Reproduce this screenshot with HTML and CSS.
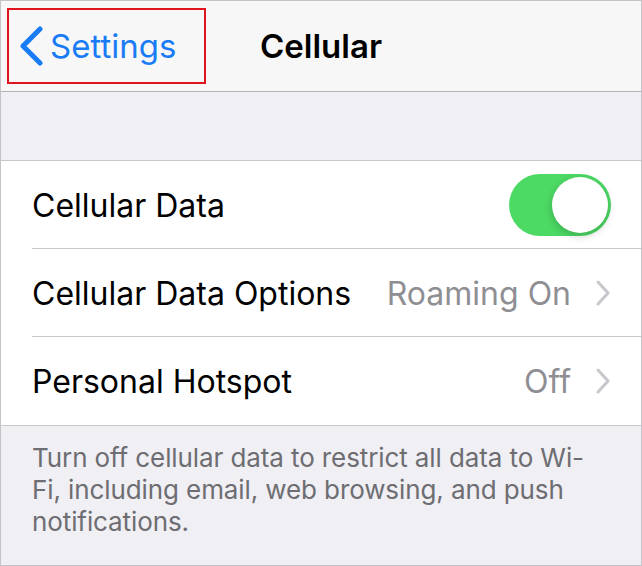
FILE: index.html
```html
<!DOCTYPE html>
<html lang="en">
<head>
    <meta charset="UTF-8">
    <meta name="viewport" content="width=device-width, initial-scale=1.0">
    <title>Cellular</title>
    <link rel="stylesheet" href="styles.css">
</head>
<body>
    <div class="screen">
        <div class="navbar">
            <div class="back">
                <svg class="back-chevron" width="26" height="40" viewBox="0 0 26 40">
                    <path d="M22 3 L5 20 L22 37" fill="none" stroke="#1a7cf5" stroke-width="5" stroke-linecap="round" stroke-linejoin="round"/>
                </svg>
                <span>Settings</span>
            </div>
            <h1 class="title">Cellular</h1>
        </div>

        <div class="group">
            <div class="row">
                <span class="label">Cellular Data</span>
                <div class="switch on"><div class="knob"></div></div>
            </div>
            <div class="row">
                <span class="label">Cellular Data Options</span>
                <span class="value">Roaming On</span>
                <svg class="chevron" width="16" height="26" viewBox="0 0 16 26">
                    <path d="M3 2 L13 13 L3 24" fill="none" stroke="#c7c7cc" stroke-width="3" stroke-linecap="round" stroke-linejoin="round"/>
                </svg>
            </div>
            <div class="row">
                <span class="label">Personal Hotspot</span>
                <span class="value">Off</span>
                <svg class="chevron" width="16" height="26" viewBox="0 0 16 26">
                    <path d="M3 2 L13 13 L3 24" fill="none" stroke="#c7c7cc" stroke-width="3" stroke-linecap="round" stroke-linejoin="round"/>
                </svg>
            </div>
        </div>

        <p class="footer-note">Turn off cellular data to restrict all data to Wi-Fi, including email, web browsing, and push notifications.</p>
    </div>
</body>
</html>
```

FILE: styles.css
```css
* {
    margin: 0;
    padding: 0;
    box-sizing: border-box;
}

body {
    font-family: Inter, 'Noto Sans', sans-serif;
    background: #fff;
}

.screen {
    width: 642px;
    height: 566px;
    border: 1px solid #c4c4c8;
    background: #efeff4;
    overflow: hidden;
}

.navbar {
    height: 91px;
    background: #f7f7f7;
    border-bottom: 1px solid #b2b2b2;
    display: flex;
    align-items: center;
    justify-content: center;
    position: relative;
}

.back {
    position: absolute;
    left: 6px;
    top: 7px;
    width: 199px;
    height: 76px;
    border: 2px solid #e0141e;
    display: flex;
    align-items: center;
    gap: 6px;
    padding-left: 9px;
    color: #1a7cf5;
    font-size: 33px;
}

.title {
    font-size: 33px;
    font-weight: 600;
    color: #000;
}

.group {
    margin-top: 68px;
    background: #fff;
    border-top: 1px solid #c8c7cc;
    border-bottom: 1px solid #c8c7cc;
}

.row {
    height: 88px;
    display: flex;
    align-items: center;
    padding: 0 30px 0 31px;
    position: relative;
    gap: 24px;
}

.row + .row::before {
    content: '';
    position: absolute;
    top: -1px;
    left: 31px;
    right: 0;
    border-top: 1px solid #c8c7cc;
}

.label {
    flex: 1;
    font-size: 32px;
    color: #000;
}

.value {
    font-size: 32px;
    color: #8e8e93;
}

.switch {
    width: 102px;
    height: 62px;
    border-radius: 31px;
    background: #4cd964;
    display: flex;
    align-items: center;
    justify-content: flex-end;
    padding: 3px;
}

.knob {
    width: 56px;
    height: 56px;
    border-radius: 50%;
    background: #fff;
    box-shadow: 0 3px 8px rgba(0, 0, 0, 0.2);
}

.footer-note {
    padding: 16px 30px 0 31px;
    font-size: 26px;
    line-height: 32px;
    color: #6d6d72;
    letter-spacing: -0.1px;
}
```
